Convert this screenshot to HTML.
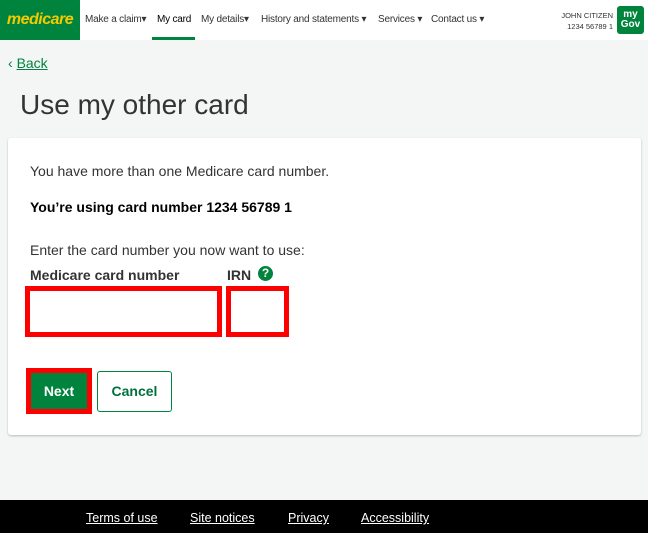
<!DOCTYPE html>
<html><head><style>
body{margin:0;width:648px;height:533px;background:#f3f6f5;font-family:"Liberation Sans",sans-serif;position:relative;overflow:hidden}
.hdr{position:absolute;left:0;top:0;width:648px;height:40px;background:#fff}
.logo{position:absolute;left:0;top:0;width:80px;height:40px;background:#00843d;color:#f5c900;font-style:italic;font-weight:bold;font-size:16px;line-height:40px;text-align:center;letter-spacing:-0.5px}
.nav{position:absolute;top:14px;font-size:10px;color:#333;white-space:nowrap;letter-spacing:-0.2px}
.ul{position:absolute;left:152px;top:37px;width:43px;height:3px;background:#00843d}
.u{position:absolute;left:540px;top:10px;font-size:7.5px;color:#333;text-align:right;width:73px;line-height:11px;white-space:nowrap}
.mg{position:absolute;left:617px;top:6px;width:27px;height:28px;background:#00843d;border-radius:3px;color:#fff;font-weight:bold;font-size:10px;line-height:10px;padding-top:4px;box-sizing:border-box;text-align:center}
.back{position:absolute;left:8px;top:55px;font-size:14px;color:#00843d}
.back span{text-decoration:underline}
h1{position:absolute;left:20px;top:89px;margin:0;font-weight:normal;font-size:28px;color:#333}
.card{position:absolute;left:8px;top:138px;width:633px;height:297px;background:#fff;border-radius:3px;box-shadow:0 1px 2px #bbb}
.t{position:absolute;font-size:14px;color:#333}
.b{font-weight:bold;color:#000}
.rf{position:absolute;border:5px solid #f00;box-sizing:border-box;background:#fff}
.btn{position:absolute;box-sizing:border-box;font-weight:bold;font-size:14px;text-align:center}
.ft{position:absolute;left:0;top:500px;width:648px;height:33px;background:#000}
.ft a{position:absolute;top:11px;color:#fff;font-size:12.5px;text-decoration:underline}
</style></head><body>
<div class="hdr">
<div class="logo">medicare</div>
<div class="nav" style="left:85px">Make a claim▾</div>
<div class="nav" style="left:157px;color:#000">My card</div>
<div class="nav" style="left:201px">My details▾</div>
<div class="nav" style="left:261px">History and statements ▾</div>
<div class="nav" style="left:378px">Services ▾</div>
<div class="nav" style="left:431px">Contact us ▾</div>
<div class="ul"></div>
<div class="u">JOHN CITIZEN<br>1234 56789 1</div>
<div class="mg">my<br>Gov</div>
</div>
<div class="back">‹ <span>Back</span></div>
<h1>Use my other card</h1>
<div class="card"></div>
<div class="t" style="left:30px;top:163px">You have more than one Medicare card number.</div>
<div class="t b" style="left:30px;top:199px">You’re using card number 1234 56789 1</div>
<div class="t" style="left:30px;top:242px">Enter the card number you now want to use:</div>
<div class="t b" style="left:30px;top:267px;color:#333">Medicare card number</div>
<div class="t b" style="left:227px;top:267px;color:#333">IRN</div>
<div style="position:absolute;left:258px;top:266px;width:15px;height:15px;border-radius:50%;background:#00843d;color:#fff;font-weight:bold;font-size:12px;text-align:center;line-height:15px">?</div>
<div class="rf" style="left:25px;top:286px;width:197px;height:51px"></div>
<div class="rf" style="left:226px;top:286px;width:63px;height:51px"></div>
<div class="btn" style="left:26px;top:368px;width:66px;height:46px;border:5px solid #f00;background:#00843d;color:#fff;line-height:36px">Next</div>
<div class="btn" style="left:97px;top:371px;width:75px;height:41px;border:1px solid #00843d;border-radius:3px;color:#00703c;line-height:39px;background:#fff">Cancel</div>
<div class="ft">
<a style="left:86px">Terms of use</a>
<a style="left:190px">Site notices</a>
<a style="left:288px">Privacy</a>
<a style="left:361px">Accessibility</a>
</div>
</body></html>
